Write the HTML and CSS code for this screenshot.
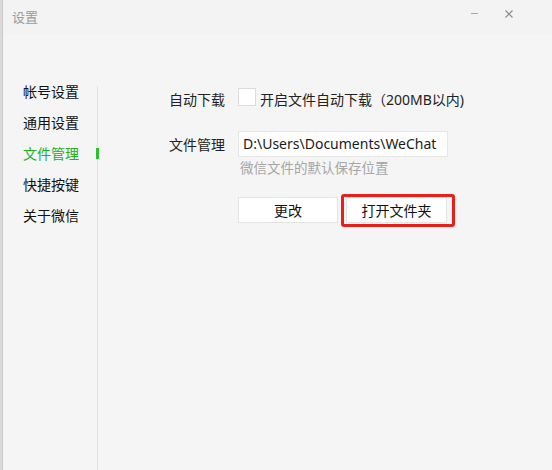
FILE: index.html
```html
<!DOCTYPE html>
<html lang="zh-CN">

<head>
    <meta charset="UTF-8">
    <meta name="viewport" content="width=device-width, initial-scale=1.0">
    <title>设置</title>
    <link rel="stylesheet" href="styles.css">
</head>

<body>
    <div class="window">
        <div class="edge"></div>

        <div class="app">
            <!-- Title bar -->
            <div class="titlebar">
                <span class="title">设置</span>
                <div class="controls">
                    <span class="btn-min"></span>
                    <svg class="btn-close" width="8" height="8" viewBox="0 0 8 8">
                        <path d="M0.5 0.5 L7.5 7.5 M7.5 0.5 L0.5 7.5" stroke="#8a8a8a" stroke-width="1.1" fill="none" />
                    </svg>
                </div>
            </div>

            <div class="main">
                <!-- Sidebar -->
                <div class="sidebar">
                    <ul class="menu">
                        <li>帐号设置</li>
                        <li>通用设置</li>
                        <li class="active">文件管理</li>
                        <li>快捷按键</li>
                        <li>关于微信</li>
                    </ul>
                </div>

                <!-- Settings -->
                <div class="content">
                    <div class="row row-download">
                        <span class="label">自动下载</span>
                        <span class="checkbox"></span>
                        <span class="check-text">开启文件自动下载（200MB以内)</span>
                    </div>

                    <div class="row row-path">
                        <span class="label">文件管理</span>
                        <div class="path-box">D:\Users\Documents\WeChat</div>
                    </div>
                    <div class="hint">微信文件的默认保存位置</div>

                    <div class="buttons">
                        <button class="btn">更改</button>
                        <div class="mark">
                            <button class="btn btn-open">打开文件夹</button>
                        </div>
                    </div>
                </div>
            </div>
        </div>
    </div>
</body>

</html>
```

FILE: styles.css
```css
* {
    margin: 0;
    padding: 0;
    box-sizing: border-box;
}

body {
    font-family: "Noto Sans", "Noto Sans CJK SC", sans-serif;
    font-size: 14px;
    background-color: #f5f5f5;
    color: #1a1a1a;
    overflow: hidden;
}

.window {
    display: flex;
    width: 552px;
    height: 470px;
}

.edge {
    width: 3px;
    background-color: #dadada;
    border-right: 1px solid #c9c9c9;
}

.app {
    flex: 1;
    display: flex;
    flex-direction: column;
    background-color: #f5f5f5;
}

.titlebar {
    height: 34px;
    display: flex;
    align-items: center;
    justify-content: space-between;
    padding-left: 9px;
    background-color: #f3f3f3;
}

.title {
    font-size: 13px;
    color: #9a9a9a;
    margin-top: -2px;
}

.controls {
    display: flex;
    align-items: center;
    gap: 27px;
    padding-right: 39px;
    margin-top: -7px;
}

.btn-min {
    width: 7px;
    height: 1px;
    background-color: #a8a8a8;
}

.main {
    flex: 1;
    display: flex;
}

.sidebar {
    width: 95px;
    margin-top: 52px;
    border-right: 1px solid #e2e2e2;
}

.menu {
    list-style: none;
    margin-top: -10px;
}

.menu li {
    position: relative;
    height: 31px;
    line-height: 31px;
    padding-left: 20px;
    color: #111;
}

.menu li.active {
    color: #22b022;
}

.menu li.active::after {
    content: "";
    position: absolute;
    right: -2px;
    top: 10px;
    width: 3px;
    height: 11px;
    background-color: #2dc12d;
}

.content {
    flex: 1;
    padding: 54px 0 0 71px;
}

.row {
    display: flex;
}

.label {
    width: 69px;
    color: #222;
}

.row-download {
    height: 22px;
    align-items: center;
}

.checkbox {
    width: 18px;
    height: 18px;
    margin-top: -4px;
    background-color: #fff;
    border: 1px solid #dcdcdc;
}

.check-text {
    margin-left: 4px;
    color: #222;
}

.row-path {
    margin-top: 21px;
    align-items: center;
}

.path-box {
    width: 210px;
    height: 26px;
    line-height: 24px;
    padding-left: 4px;
    background-color: #fff;
    border: 1px solid #e6e6e6;
    color: #1a1a1a;
    white-space: nowrap;
    overflow: hidden;
}

.hint {
    margin: 1px 0 0 71px;
    line-height: 20px;
    font-size: 13.5px;
    color: #a6a6a6;
}

.buttons {
    display: flex;
    align-items: flex-start;
    margin: 16px 0 0 69px;
}

.btn {
    width: 100px;
    height: 26px;
    margin-top: 3px;
    font-family: inherit;
    font-size: 14px;
    color: #111;
    background-color: #fff;
    border: 1px solid #e4e4e4;
}

.mark {
    margin-left: 3px;
    padding: 0 5px 1px 2px;
    border: 3px solid #e8201c;
    border-radius: 3px;
}

.btn-open {
    width: 101px;
    margin-top: 0;
}
```
